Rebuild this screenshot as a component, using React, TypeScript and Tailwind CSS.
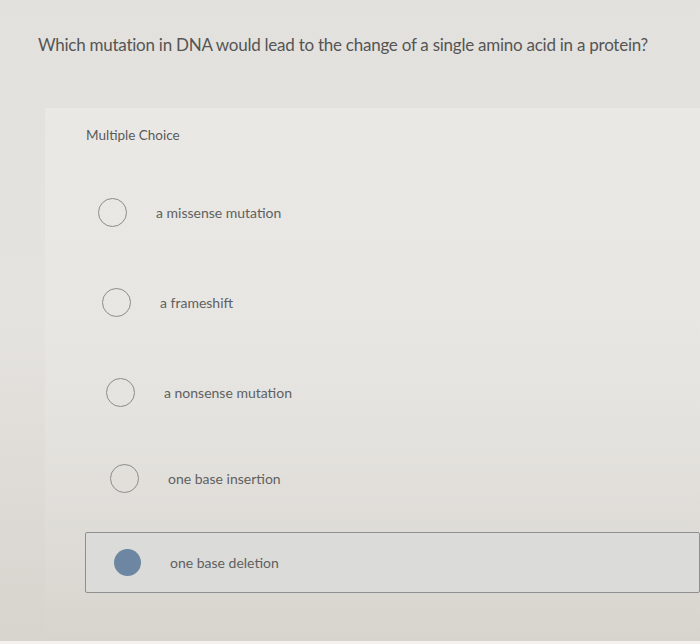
import React from "react";

type Choice = { label: string; rowClass: string; selected?: boolean };

const choices: Choice[] = [
  { label: "a missense mutation", rowClass: "mt-[39px] ml-[24px]" },
  { label: "a frameshift", rowClass: "mt-[29px] ml-[28px]" },
  { label: "a nonsense mutation", rowClass: "mt-[29px] ml-[32px]" },
  { label: "one base insertion", rowClass: "mt-[25px] ml-[36px]" },
  { label: "one base deletion", rowClass: "mt-[23px] ml-[40px]", selected: true },
];

function Radio({ selected }: { selected?: boolean }) {
  if (selected) {
    return <span className="block h-[27px] w-[27px] shrink-0 rounded-full bg-[#6d87a3]" />;
  }
  return (
    <span className="block h-[29px] w-[29px] shrink-0 rounded-full border-[1.5px] border-[#8c8c8a]" />
  );
}

export default function App() {
  return (
    <div
      className="relative h-[644px] w-[700px] overflow-hidden bg-linear-to-b from-[#e3e1dd] via-[#e5e3df] to-[#d7d4ce] text-[#555]"
      style={{ fontFamily: "Lato, 'Open Sans', sans-serif" }}
    >
      <div className="pl-[38px] pt-[35px] text-[17px] leading-[20px] tracking-[-0.25px] text-[#555]">
        Which mutation in DNA would lead to the change of a single amino acid in a protein?
      </div>

      <div className="ml-[45px] mt-[53px] h-[536px] bg-linear-to-b from-[#ecebe8]/70 via-[#ebeae7]/40 to-transparent">
        <div className="pl-[41px] pt-[19px] text-[13.5px] leading-[16px] text-[#5a5a5a]">
          Multiple Choice
        </div>

        <div className="flex flex-col">
          {choices.map((c) => (
            <div
              key={c.label}
              className={
                c.rowClass +
                " flex h-[61px] items-center " +
                (c.selected
                  ? "rounded-[2px] border border-[#8f8f8f] bg-[#dbdbd9] pl-[28px]"
                  : "pl-[29px]")
              }
            >
              <Radio selected={c.selected} />
              <span className="ml-[29px] text-[14px] text-[#606060]">{c.label}</span>
            </div>
          ))}
        </div>
      </div>

      <div className="absolute bottom-0 left-0 h-[3px] w-full bg-[#f4f3f1]" />
    </div>
  );
}
